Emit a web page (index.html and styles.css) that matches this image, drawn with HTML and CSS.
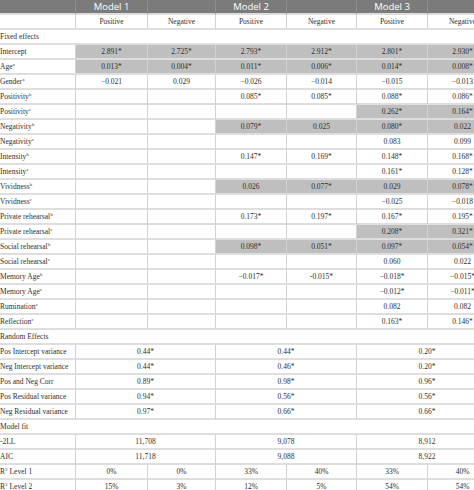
FILE: index.html
```html
<!DOCTYPE html>
<html>
<head>
<meta charset="utf-8">
<link rel="stylesheet" href="styles.css">
</head>
<body>
<table class="tbl">
<colgroup>
<col class="c0"><col class="c1"><col class="c2"><col class="c3"><col class="c4"><col class="c5"><col class="c6">
</colgroup>
<thead>
<tr class="head"><th></th><th>Model 1</th><th></th><th>Model 2</th><th></th><th>Model 3</th><th></th></tr>
</thead>
<tbody>
<tr><td class="lab"></td><td>Positive</td><td>Negative</td><td>Positive</td><td>Negative</td><td>Positive</td><td>Negative</td></tr>
<tr class="sec"><td class="lab" colspan="7">Fixed effects</td></tr>
<tr><td class="lab">Intercept</td><td class="g">2.891*</td><td class="g">2.725*</td><td class="g">2.793*</td><td class="g">2.912*</td><td class="g">2.801*</td><td class="g">2.930*</td></tr>
<tr><td class="lab">Age<sup>a</sup></td><td class="g">0.013*</td><td class="g">0.004*</td><td class="g">0.011*</td><td class="g">0.006*</td><td class="g">0.014*</td><td class="g">0.008*</td></tr>
<tr><td class="lab">Gender<sup>a</sup></td><td>−0.021</td><td>0.029</td><td>−0.026</td><td>−0.014</td><td>−0.015</td><td>−0.013</td></tr>
<tr><td class="lab">Positivity<sup>b</sup></td><td></td><td></td><td>0.085*</td><td>0.085*</td><td>0.088*</td><td>0.086*</td></tr>
<tr><td class="lab">Positivity<sup>c</sup></td><td></td><td></td><td></td><td></td><td class="g">0.262*</td><td class="g">0.164*</td></tr>
<tr><td class="lab">Negativity<sup>b</sup></td><td></td><td></td><td class="g">0.079*</td><td class="g">0.025</td><td class="g">0.080*</td><td class="g">0.022</td></tr>
<tr><td class="lab">Negativity<sup>c</sup></td><td></td><td></td><td></td><td></td><td>0.083</td><td>0.099</td></tr>
<tr><td class="lab">Intensity<sup>b</sup></td><td></td><td></td><td>0.147*</td><td>0.169*</td><td>0.148*</td><td>0.168*</td></tr>
<tr><td class="lab">Intensity<sup>c</sup></td><td></td><td></td><td></td><td></td><td>0.161*</td><td>0.128*</td></tr>
<tr><td class="lab">Vividness<sup>b</sup></td><td></td><td></td><td class="g">0.026</td><td class="g">0.077*</td><td class="g">0.029</td><td class="g">0.078*</td></tr>
<tr><td class="lab">Vividness<sup>c</sup></td><td></td><td></td><td></td><td></td><td>−0.025</td><td>−0.018</td></tr>
<tr><td class="lab">Private rehearsal<sup>b</sup></td><td></td><td></td><td>0.173*</td><td>0.197*</td><td>0.167*</td><td>0.195*</td></tr>
<tr><td class="lab">Private rehearsal<sup>c</sup></td><td></td><td></td><td></td><td></td><td class="g">0.208*</td><td class="g">0.321*</td></tr>
<tr><td class="lab">Social rehearsal<sup>b</sup></td><td></td><td></td><td class="g">0.098*</td><td class="g">0.051*</td><td class="g">0.097*</td><td class="g">0.054*</td></tr>
<tr><td class="lab">Social rehearsal<sup>c</sup></td><td></td><td></td><td></td><td></td><td>0.060</td><td>0.022</td></tr>
<tr><td class="lab">Memory Age<sup>b</sup></td><td></td><td></td><td>−0.017*</td><td>-0.015*</td><td>−0.018*</td><td>−0.015*</td></tr>
<tr><td class="lab">Memory Age<sup>c</sup></td><td></td><td></td><td></td><td></td><td>−0.012*</td><td>−0.011*</td></tr>
<tr><td class="lab">Rumination<sup>c</sup></td><td></td><td></td><td></td><td></td><td>0.082</td><td>0.082</td></tr>
<tr><td class="lab">Reflection<sup>c</sup></td><td></td><td></td><td></td><td></td><td>0.163*</td><td>0.146*</td></tr>
<tr class="sec"><td class="lab" colspan="7">Random Effects</td></tr>
<tr><td class="lab">Pos Intercept variance</td><td colspan="2">0.44*</td><td colspan="2">0.44*</td><td colspan="2">0.20*</td></tr>
<tr><td class="lab">Neg Intercept variance</td><td colspan="2">0.44*</td><td colspan="2">0.46*</td><td colspan="2">0.20*</td></tr>
<tr><td class="lab">Pos and Neg Corr</td><td colspan="2">0.89*</td><td colspan="2">0.98*</td><td colspan="2">0.96*</td></tr>
<tr><td class="lab">Pos Residual variance</td><td colspan="2">0.94*</td><td colspan="2">0.56*</td><td colspan="2">0.56*</td></tr>
<tr><td class="lab">Neg Residual variance</td><td colspan="2">0.97*</td><td colspan="2">0.66*</td><td colspan="2">0.66*</td></tr>
<tr class="sec"><td class="lab" colspan="7">Model fit</td></tr>
<tr><td class="lab">-2LL</td><td colspan="2">11,708</td><td colspan="2">9,078</td><td colspan="2">8,912</td></tr>
<tr><td class="lab">AIC</td><td colspan="2">11,718</td><td colspan="2">9,088</td><td colspan="2">8,922</td></tr>
<tr><td class="lab">R<sup>2</sup> Level 1</td><td>0%</td><td>0%</td><td>33%</td><td>40%</td><td>33%</td><td>40%</td></tr>
<tr><td class="lab">R<sup>2</sup> Level 2</td><td>15%</td><td>3%</td><td>12%</td><td>5%</td><td>54%</td><td>54%</td></tr>
</tbody>
</table>
</body>
</html>
```
FILE: styles.css
```css
html, body {
  margin: 0;
  padding: 0;
  background: #ffffff;
  overflow: hidden;
}

.tbl {
  border-collapse: separate;
  border-spacing: 0;
  table-layout: fixed;
  width: 497px;
  font-family: "Liberation Serif", "Times New Roman", serif;
  font-size: 7.5px;
  color: #2e2e2e;
}

.c0 { width: 75px; }
.c1 { width: 72px; }
.c2 { width: 68px; }
.c3 { width: 71px; }
.c4 { width: 70px; }
.c5 { width: 71px; }
.c6 { width: 70px; }

.tbl td,
.tbl th {
  padding: 0;
  height: 13px;
  line-height: 13px;
  text-align: center;
  white-space: nowrap;
  overflow: hidden;
  border-bottom: 2px solid #dedede;
}

.tbl td + td {
  border-left: 1px solid #d2d2d2;
}

.tbl .lab {
  text-align: left;
  padding-left: 0;
}

.head th {
  background: #7b7b7b;
  color: #ffffff;
  font-family: "Open Sans", "Liberation Sans", sans-serif;
  font-size: 9.5px;
  font-weight: normal;
  border-bottom: 2px solid #dedede;
}

.head th + th {
  border-left: 1px solid #8c8c8c;
}

.tbl .g {
  background: #bfbfbf;
}

.tbl sup {
  font-size: 4.6px;
  line-height: 0;
  vertical-align: 2.6px;
  margin-left: 0.3px;
}
```
